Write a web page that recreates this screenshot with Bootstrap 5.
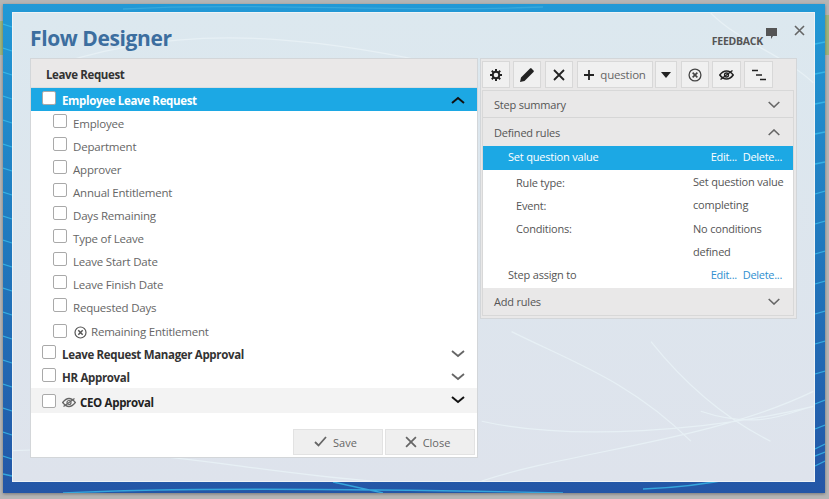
<!DOCTYPE html>
<html lang="en"><head><meta charset="utf-8"><title>Flow Designer</title>
<link href="https://cdn.jsdelivr.net/npm/bootstrap@5.3.0/dist/css/bootstrap.min.css" rel="stylesheet">
<style>
html,body{height:100%;}
body{width:829px;height:499px;overflow:hidden;background:linear-gradient(#9db57f,#9db57f) 0 21px/3px 34px no-repeat,linear-gradient(#9db57f,#9db57f) 825px 15px/4px 40px no-repeat,#b5b5b5;font-family:"Open Sans","Liberation Sans",sans-serif;font-size:11.5px;letter-spacing:-.2px;color:#555;padding:4px 4px 6px 3px;}
.fd-frame{position:relative;height:489px;padding:8px 10px 11px 9px;background:linear-gradient(180deg,#2299d6 0%,#2078bd 50%,#2456a6 100%);overflow:hidden;box-shadow:0 1px 3px rgba(0,0,0,.35);}
.fd-waves{position:absolute;left:0;top:0;width:100%;height:100%;}
.fd-panel{position:relative;height:470px;background:linear-gradient(180deg,#dce8ef 0%,#dee3ec 100%);border:1px solid #eef3f6;overflow:hidden;}
.fd-pwaves{position:absolute;left:0;top:0;width:100%;height:100%;}
.fd-inner{position:relative;height:100%;padding:0 17px 0 17px;}
.fd-head{height:45px;}
.fd-title{font-size:21px;font-weight:700;letter-spacing:-.4px;color:#3c6e9f;line-height:1;margin:15px 0 0 0;}
.fd-feedback{font-size:10.5px;font-weight:700;letter-spacing:-.25px;color:#555;margin-top:22px;margin-right:34px;position:relative;line-height:12px;}
.fd-bubble{position:absolute;left:54px;top:-7px;}
.fd-x{position:absolute;right:9px;top:12px;}
.fd-cols{gap:2px;}
.fd-left{width:448px;height:400px;background:#fff;border:1px solid #d3d6d9;}
.fd-lhead{height:29px;background:#eae8e8;color:#333;font-weight:700;letter-spacing:-.38px;padding:3px 0 0 15px;border-bottom:1px solid #d9dde0;}
.fd-row{height:23px;padding:2px 12px 0 11px;color:#333;font-weight:700;letter-spacing:-.33px;}
.fd-row.fd-on{background:#1ca8e4;color:#fff;}
.fd-row.fd-soft{background:#f3f3f3;color:#222;height:25px;padding-top:4px;}
.fd-row svg:last-child{margin-top:-2px;}
.fd-row.fd-soft svg:last-child{margin-top:-5px;}
.fd-sub{height:23px;padding:2px 0 0 22px;font-weight:400;color:#666;}
.fd-sub.fd-tall{height:24px;padding-top:4px;}
.fd-box{width:14px;height:14px;flex:none;background:#fff;border:1px solid #a9a9a9;border-radius:2px;margin:-5px 6px 0 0;}
.fd-tall .fd-box{margin-top:-3px;}
.fd-soft .fd-box{margin-top:-3px;}
.fd-ic{margin-left:1px;}
.fd-foot{gap:2px;padding:16px 2px 2px 0;}
.fd-btn{width:90px;height:26px;background:#efefef;border:1px solid #e2e2e2;color:#666;font-size:11px;letter-spacing:0;gap:6px;border-radius:0;padding:2px 5px 0 0;}
.fd-btn svg{margin-top:-3px;}
.fd-right{width:317px;height:261px;background:#e9e8e8;border:1px solid #d3d6d9;padding:2px 2px 3px 1px;}
.fd-tools{gap:3px;height:27px;margin-bottom:2px;}
.fd-tool{height:27px;width:28px;background:#f0f0f0;border:1px solid #d8d8d8;border-radius:0;padding:0;color:#666;gap:6px;font-size:11.5px;letter-spacing:-.2px;}
.fd-tool-g{margin-left:1px;}
.fd-tool-q{width:76px;margin-left:1px;}
.fd-tool-c{width:22px;margin-left:-1px;}
.fd-tool-o{margin-left:1px;}
.fd-tool-w{width:29px;}
.fd-acc{border:1px solid #d8d8d8;background:#e9e8e8;font-size:11px;letter-spacing:-.2px;}
.fd-ahead{height:27px;padding:2px 13px 0 11px;color:#555;border-bottom:1px solid #d6d6d6;}
.fd-ahead svg{margin-top:-2px;}
.fd-ahead.fd-noline{border-bottom:0;height:28px;}
.fd-ahead.fd-end{height:27px;}
.fd-sel{height:24px;background:#1ca8e4;color:#fff;padding:0 11px 2px 25px;}
.fd-links{gap:6px;letter-spacing:-.3px;}
.fd-body{background:#fff;height:118px;color:#555;padding-top:1px;}
.fd-line{padding-left:33px;line-height:23px;}
.fd-lab{width:177px;flex:none;}
.fd-val-up{margin-top:-1px;height:23px;}
.fd-val-dn{margin-top:1px;line-height:22.5px;width:90px;}
.fd-assign{height:23px;margin-top:1px;padding:0 11px 0 25px;}
.fd-link{color:#2f8fd0;text-decoration:none;}
.fd-on-link{color:#fff;text-decoration:none;}
</style></head>
<body>
<div class="fd-frame">
<svg class="fd-waves" viewBox="0 0 822 489" fill="none" stroke="#3cc0ee" stroke-width="1.300" opacity=".75"><path d="M0 20l9 3M0 44l9 3M0 68l9 3M0 92l9 3M0 116l9 3M0 140l9 3M0 164l9 3M0 188l9 3M0 212l9 3M0 236l9 3M0 260l9 3M0 284l9 3M0 308l9 3M0 332l9 3M0 356l9 3M0 380l9 3M0 404l9 3M0 428l9 3M0 452l9 3M0 470l9 2M812 40l10-2M812 70l10-2M812 100l10-2M812 130l10-2M812 160l10-2M812 190l10-3M812 220l10-3M812 250l10-3M812 280l10-3M812 310l10-3M812 340l10-3M812 370l10-3M812 400l10-4M812 425l10-4M812 445l10-5M812 462l10-5"/><path d="M60 489C200 482 420 486 560 489M330 478l50 11M640 485C700 483 770 470 822 448"/><path d="M120 5C250 -2 400 9 540 3" stroke="#5cc4ea" opacity=".5"/></svg>
<div class="fd-panel">
<svg class="fd-pwaves" viewBox="0 0 803 470" fill="none" stroke="#e7f0f5" stroke-width="1.200"><path d="M-10 440C120 432 230 460 360 470M470 470C560 440 700 430 803 380M500 320C560 350 620 370 680 430M640 330C680 380 720 410 760 430M690 400C750 420 780 400 803 395M470 410C560 430 700 420 803 395M20 60C150 10 280 20 420 50M700 0C730 30 770 40 803 70"/></svg>
<div class="fd-inner">
<div class="fd-head d-flex justify-content-between">
<h1 class="fd-title">Flow Designer</h1>
<div class="fd-feedback">FEEDBACK
<svg class="fd-bubble" width="11" height="11" viewBox="0 0 11 11"><path d="M0 0h11v8H7l-2 3V8H0z" fill="#555"/></svg></div>
<svg class="fd-x" width="11" height="11" viewBox="0 0 11 11" stroke="#666" stroke-width="1.6"><path d="M1 1l9 9M10 1l-9 9"/></svg>
</div>
<div class="fd-cols d-flex">
<div class="fd-left d-flex flex-column">
<div class="fd-lhead d-flex align-items-center">Leave Request</div>
<div class="fd-row fd-on d-flex align-items-center"><span class="fd-box"></span><span class="flex-grow-1">Employee Leave Request</span><svg width="14" height="8" viewBox="0 0 14 8" fill="none" stroke="#111" stroke-width="2"><path d="M1 7l6-5 6 5"/></svg></div>
<div class="fd-sub d-flex align-items-center"><span class="fd-box"></span>Employee</div>
<div class="fd-sub d-flex align-items-center"><span class="fd-box"></span>Department</div>
<div class="fd-sub d-flex align-items-center"><span class="fd-box"></span>Approver</div>
<div class="fd-sub d-flex align-items-center"><span class="fd-box"></span>Annual Entitlement</div>
<div class="fd-sub d-flex align-items-center"><span class="fd-box"></span>Days Remaining</div>
<div class="fd-sub d-flex align-items-center"><span class="fd-box"></span>Type of Leave</div>
<div class="fd-sub d-flex align-items-center"><span class="fd-box"></span>Leave Start Date</div>
<div class="fd-sub d-flex align-items-center"><span class="fd-box"></span>Leave Finish Date</div>
<div class="fd-sub d-flex align-items-center"><span class="fd-box"></span>Requested Days</div>
<div class="fd-sub fd-tall d-flex align-items-center"><span class="fd-box"></span><svg class="fd-ic me-1" width="13" height="13" viewBox="0 0 13 13" fill="none" stroke="#555"><circle cx="6.5" cy="6.5" r="5.5" stroke-width="1.2"/><path d="M4.3 4.3l4.4 4.4M8.7 4.3l-4.4 4.4" stroke-width="1.5"/></svg>Remaining Entitlement</div>
<div class="fd-row d-flex align-items-center"><span class="fd-box"></span><span class="flex-grow-1">Leave Request Manager Approval</span><svg width="14" height="8" viewBox="0 0 14 8" fill="none" stroke="#666" stroke-width="1.8"><path d="M1 1l6 5 6-5"/></svg></div>
<div class="fd-row d-flex align-items-center"><span class="fd-box"></span><span class="flex-grow-1">HR Approval</span><svg width="14" height="8" viewBox="0 0 14 8" fill="none" stroke="#666" stroke-width="1.8"><path d="M1 1l6 5 6-5"/></svg></div>
<div class="fd-row fd-soft d-flex align-items-center"><span class="fd-box"></span><svg class="me-1" width="14" height="11" viewBox="0 0 14 11" fill="none" stroke="#666"><path d="M.7 5.5C3 2.5 5 1.5 7 1.5s4 1 6.3 4C11 8.500 9 9.500 7 9.500s-4-1-6.300-4z" stroke-width="1.3"/><circle cx="7" cy="5.5" r="2" stroke-width="1.2"/><path d="M1.500 9.500L12.500 1.500" stroke-width="1.3"/></svg><span class="flex-grow-1">CEO Approval</span><svg width="14" height="8" viewBox="0 0 14 8" fill="none" stroke="#111" stroke-width="2"><path d="M1 1l6 5 6-5"/></svg></div>
<div class="fd-foot d-flex justify-content-end mt-auto">
<button class="btn fd-btn d-flex align-items-center justify-content-center"><svg width="13" height="11" viewBox="0 0 13 11" fill="none" stroke="#666" stroke-width="1.8"><path d="M1 6l3.500 3.500L12 1"/></svg>Save</button>
<button class="btn fd-btn d-flex align-items-center justify-content-center"><svg width="12" height="12" viewBox="0 0 11 11" fill="none" stroke="#666" stroke-width="1.600"><path d="M1 1l9 9M10 1l-9 9"/></svg>Close</button>
</div>
</div>
<div class="fd-right">
<div class="fd-tools d-flex">
<button class="btn fd-tool d-flex align-items-center justify-content-center" aria-label="Settings"><svg width="12" height="12" viewBox="0 0 12 12"><circle cx="6" cy="6" r="3.300" fill="none" stroke="#222" stroke-width="2"/><path d="M6 0v2.500M6 9.500V12M0 6h2.500M9.500 6H12M1.800 1.800l1.800 1.800M8.400 8.400l1.800 1.800M10.200 1.800L8.400 3.600M3.600 8.400l-1.800 1.800" stroke="#222" stroke-width="2"/></svg></button>
<button class="btn fd-tool d-flex align-items-center justify-content-center" aria-label="Edit"><svg width="14" height="14" viewBox="0 0 14 14" fill="#222"><path d="M0 14l1-4.500 8-8L12.500 5l-8 8zM10 .5l1-.5 3 3-.5 1-1 1L9 1.500z"/></svg></button>
<button class="btn fd-tool fd-tool-g d-flex align-items-center justify-content-center" aria-label="Delete"><svg width="12" height="12" viewBox="0 0 12 12" fill="none" stroke="#222" stroke-width="1.8"><path d="M1 1l10 10M11 1L1 11"/></svg></button>
<button class="btn fd-tool fd-tool-q d-flex align-items-center justify-content-center"><svg width="10" height="10" viewBox="0 0 10 10" stroke="#222" stroke-width="1.800"><path d="M5 0v10M0 5h10"/></svg><span>question</span></button>
<button class="btn fd-tool fd-tool-c d-flex align-items-center justify-content-center" aria-label="More"><svg width="10" height="6" viewBox="0 0 10 6" fill="#222"><path d="M0 0h10L5 6z"/></svg></button>
<button class="btn fd-tool fd-tool-o d-flex align-items-center justify-content-center" aria-label="Remove"><svg width="14" height="14" viewBox="0 0 13 13" fill="none" stroke="#444"><circle cx="6.500" cy="6.500" r="5.500" stroke-width="1.200"/><path d="M4.300 4.300l4.400 4.400M8.700 4.300l-4.400 4.400" stroke-width="1.500"/></svg></button>
<button class="btn fd-tool fd-tool-w d-flex align-items-center justify-content-center" aria-label="Hide"><svg width="15" height="12" viewBox="0 0 15 12" fill="none" stroke="#222"><path d="M.8 6C3 3 5.300 2 7.500 2s4.500 1 6.700 4c-2.200 3-4.500 4-6.700 4S3 9 .8 6z" stroke-width="1.500"/><circle cx="7.500" cy="6" r="2" stroke-width="1.300"/><path d="M1.500 10.500L13.500 1.500" stroke-width="1.400"/></svg></button>
<button class="btn fd-tool fd-tool-w d-flex align-items-center justify-content-center" aria-label="Tree"><svg width="14" height="12" viewBox="0 0 14 12" stroke="#222" stroke-width="1.600"><path d="M0 1.500h6M4 6h6M8 10.500h6"/></svg></button>
</div>
<div class="fd-acc">
<div class="fd-ahead d-flex align-items-center justify-content-between"><span>Step summary</span><svg width="12" height="7" viewBox="0 0 12 7" fill="none" stroke="#666" stroke-width="1.600"><path d="M.7 1L6 6l5.300-5"/></svg></div>
<div class="fd-ahead fd-noline d-flex align-items-center justify-content-between"><span>Defined rules</span><svg width="12" height="7" viewBox="0 0 12 7" fill="none" stroke="#666" stroke-width="1.600"><path d="M.7 6L6 1l5.300 5"/></svg></div>
<div class="fd-sel d-flex align-items-center justify-content-between"><span>Set question value</span><span class="fd-links d-flex"><a class="fd-on-link" href="#">Edit...</a><a class="fd-on-link" href="#">Delete...</a></span></div>
<div class="fd-body">
<div class="fd-line d-flex"><span class="fd-lab">Rule type:</span><span class="fd-val-up">Set question value</span></div>
<div class="fd-line d-flex"><span class="fd-lab">Event:</span><span class="fd-val-up">completing</span></div>
<div class="fd-line d-flex"><span class="fd-lab">Conditions:</span><span class="fd-val-dn">No conditions defined</span></div>
<div class="fd-assign d-flex align-items-center justify-content-between"><span>Step assign to</span><span class="fd-links d-flex"><a class="fd-link" href="#">Edit...</a><a class="fd-link" href="#">Delete...</a></span></div>
</div>
<div class="fd-ahead fd-noline fd-end d-flex align-items-center justify-content-between"><span>Add rules</span><svg width="12" height="7" viewBox="0 0 12 7" fill="none" stroke="#666" stroke-width="1.600"><path d="M.7 1L6 6l5.300-5"/></svg></div>
</div>
</div>
</div>
</div>
</div>
</div>
</div>
</body></html>
